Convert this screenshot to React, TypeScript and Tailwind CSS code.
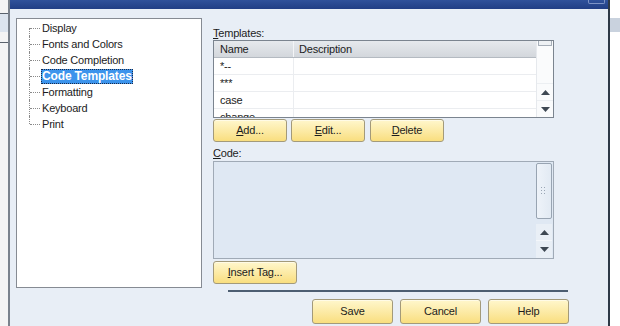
import React from "react";

const font = { fontFamily: '"Liberation Sans", Arial, sans-serif' };

const items = ["Display", "Fonts and Colors", "Code Completion", "Code Templates", "Formatting", "Keyboard", "Print"];

function Btn({ children, w, h }: { children: React.ReactNode; w: string; h: string }) {
  return (
    <div
      className={`${w} ${h} flex items-center justify-center rounded-[3px] border border-[#a39a7a] bg-gradient-to-b from-[#fff7cc] to-[#f9de7e] text-[11px] text-[#1c1c1c] shadow-[inset_0_1px_0_#fffbe6]`}
    >
      {children}
    </div>
  );
}

function UpArrow() {
  return (
    <svg width="9" height="5" viewBox="0 0 9 5">
      <path d="M0 5 L4.5 0 L9 5 Z" fill="#3e4853" />
    </svg>
  );
}
function DownArrow() {
  return (
    <svg width="9" height="5" viewBox="0 0 9 5">
      <path d="M0 0 L4.5 5 L9 0 Z" fill="#3e4853" />
    </svg>
  );
}

export default function App() {
  return (
    <div className="w-[620px] h-[326px] overflow-hidden flex bg-white tracking-[-0.2px]" style={font}>
      {/* left outside strip */}
      <div className="w-[8px] flex flex-col">
        <div className="h-[13px] bg-[#f4f4f4]" />
        <div className="h-[1px] bg-[#5a626c]" />
        <div className="h-[18px] bg-[#dce4ee]" />
        <div className="h-[10px] bg-[#f4f4f4]" />
        <div className="h-[1px] bg-[#5a626c]" />
        <div className="flex-1 bg-[#f4f4f4]" />
      </div>

      {/* dialog */}
      <div className="w-[602px] h-full flex flex-col border-l-2 border-l-[#7a828c] border-r-2 border-r-[#2e3947]">
        {/* title bar */}
        <div className="h-[9px] bg-gradient-to-b from-[#2f519b] to-[#213e85] flex justify-end pr-[3px]">
          <div className="w-[17px] h-[4px] border border-t-0 border-[#7d93c6] rounded-b-[2px]" />
        </div>

        {/* body */}
        <div className="flex-1 bg-[#e8eef6] flex pl-[6px] pt-[9px]">
          {/* tree */}
          <div className="w-[186px] h-[270px] border border-[#868b93] bg-white pt-[1px]">
            {items.map((t, i) => {
              const first = i === 0;
              const last = i === items.length - 1;
              const sel = t === "Code Templates";
              return (
                <div key={t} className="h-[16px] flex items-center">
                  <div className="relative w-[24px] h-full">
                    <div
                      className={`absolute left-[12px] w-0 border-l border-dotted border-[#8a8a8a] ${first ? "top-[8px]" : "top-0"} ${last ? "h-[8px]" : "bottom-0"}`}
                    />
                    <div className="absolute left-[13px] top-[8px] w-[10px] h-0 border-t border-dotted border-[#8a8a8a]" />
                  </div>
                  {sel ? (
                    <span className="h-[15px] px-[1px] flex items-center bg-[#3c94ec] text-white font-bold text-[12px] tracking-[-0.15px] outline-1 outline-dotted outline-[#1a2a4a] -outline-offset-1">
                      {t}
                    </span>
                  ) : (
                    <span className="text-[11px] text-[#1c1c1c] pl-[1px]">{t}</span>
                  )}
                </div>
              );
            })}
          </div>

          {/* right column */}
          <div className="ml-[11px] w-[360px] flex flex-col text-[#1c1c1c]">
            <div className="mt-[8px] h-[14px] leading-[14px] text-[11px]">
              <span className="underline">T</span>emplates:
            </div>

            {/* table */}
            <div className="w-[341px] h-[78px] border border-[#7b848f] bg-white flex overflow-hidden">
              <div className="flex-1 flex flex-col">
                <div className="h-[17px] flex bg-gradient-to-b from-[#e6e9ed] to-[#d3d7dc] border-b border-[#b4bac1] text-[11px]">
                  <div className="w-[80px] pl-[6px] flex items-center border-r border-[#f4f5f7]">Name</div>
                  <div className="flex-1 pl-[5px] flex items-center">Description</div>
                </div>
                {["*--", "***", "case", "change"].map((r) => (
                  <div key={r} className="h-[17px] shrink-0 flex border-b border-[#ebedf0] text-[11px]">
                    <div className="w-[80px] pl-[6px] flex items-center border-r border-[#ebedf0]">{r}</div>
                    <div className="flex-1" />
                  </div>
                ))}
              </div>
              <div className="w-[17px] flex flex-col border-l border-[#e6e9ed] bg-[#fafbfc]">
                <div className="mx-[1px] h-[5px] border border-t-0 border-[#a6aeb8] bg-[#eef1f4] rounded-b-[1px]" />
                <div className="flex-1" />
                <div className="h-[17px] flex items-center justify-center border-t border-[#eceff2]">
                  <UpArrow />
                </div>
                <div className="h-[17px] flex items-center justify-center border-t border-[#eceff2]">
                  <DownArrow />
                </div>
              </div>
            </div>

            {/* buttons */}
            <div className="mt-[1px] flex gap-[4px]">
              <Btn w="w-[74px]" h="h-[23px]">
                <span className="underline">A</span>dd...
              </Btn>
              <Btn w="w-[74px]" h="h-[23px]">
                <span className="underline">E</span>dit...
              </Btn>
              <div className="ml-[1px]">
                <Btn w="w-[74px]" h="h-[23px]">
                  <span className="underline">D</span>elete
                </Btn>
              </div>
            </div>

            <div className="mt-[4px] h-[14px] leading-[14px] text-[11px]">
              <span className="underline">C</span>ode:
            </div>

            {/* code box */}
            <div className="mt-[1px] w-[341px] h-[98px] border border-[#a0aab6] bg-[#dfe8f3] flex">
              <div className="flex-1" />
              <div className="w-[17px] flex flex-col pt-[1px] pr-[1px]">
                <div className="h-[56px] border border-[#98a4b2] rounded-[2px] bg-gradient-to-r from-[#eef3f9] to-[#e2eaf3] flex items-center justify-center">
                  <svg width="6" height="8" viewBox="0 0 6 8">
                    <g fill="#9aa6b4">
                      <rect x="0" y="0" width="1" height="1" />
                      <rect x="3" y="0" width="1" height="1" />
                      <rect x="0" y="3" width="1" height="1" />
                      <rect x="3" y="3" width="1" height="1" />
                      <rect x="0" y="6" width="1" height="1" />
                      <rect x="3" y="6" width="1" height="1" />
                    </g>
                  </svg>
                </div>
                <div className="flex-1" />
                <div className="h-[17px] flex items-center justify-center bg-[#e9eff6] border-b border-[#f4f7fb]">
                  <UpArrow />
                </div>
                <div className="h-[17px] flex items-center justify-center bg-[#e9eff6]">
                  <DownArrow />
                </div>
              </div>
            </div>

            <div className="mt-[2px]">
              <Btn w="w-[84px]" h="h-[23px]">
                <span className="underline">I</span>nsert Tag...
              </Btn>
            </div>

            <div className="mt-[6px] ml-[15px] w-[340px] h-[2px] bg-[#4d5e72]" />

            <div className="mt-[7px] ml-[99px] flex gap-[7px]">
              <Btn w="w-[81px]" h="h-[25px]">Save</Btn>
              <Btn w="w-[81px]" h="h-[25px]">Cancel</Btn>
              <Btn w="w-[81px]" h="h-[25px]">Help</Btn>
            </div>
          </div>
        </div>
      </div>

      {/* right outside strip */}
      <div className="flex-1 flex flex-col">
        <div className="h-[18px] bg-white" />
        <div className="h-[14px] bg-[#c9d2de]" />
        <div className="flex-1 bg-white" />
      </div>
    </div>
  );
}
